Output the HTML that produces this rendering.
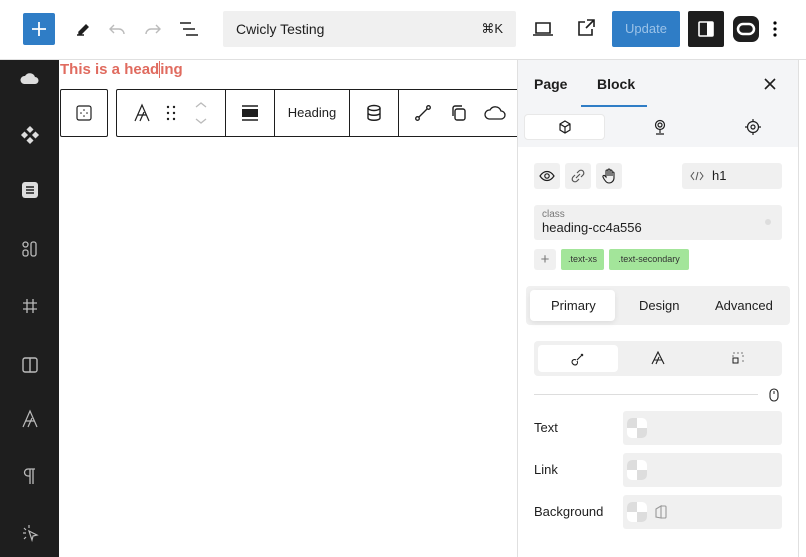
<!DOCTYPE html>
<html><head><style>
*{box-sizing:border-box;margin:0;padding:0}
body{width:806px;height:557px;overflow:hidden;background:#fff;font-family:"Liberation Sans",sans-serif;color:#1e1e1e;position:relative}
.a{position:absolute}
svg{display:block}
.sb svg{position:absolute;left:20px}
.row{font-size:13px}
</style></head><body>
<!-- top bar -->
<div class="a" style="left:0;top:0;width:806px;height:60px;border-bottom:1px solid #e0e0e0"></div>
<div class="a" style="left:23px;top:13px;width:32px;height:32px;background:#2f7dc6;border-radius:2px"><svg width="32" height="32"><path d="M16 9v14M9 16h14" stroke="#fff" stroke-width="1.8"/></svg></div>
<svg class="a" style="left:72px;top:18px" width="22" height="22"><path d="M5 17h7M7 14l7-7 2 2-7 7H7z" stroke="#1e1e1e" stroke-width="1.4" fill="#1e1e1e"/></svg>
<svg class="a" style="left:106px;top:18px" width="22" height="22"><path d="M8 7l-4 4 4 4M4 11h9a5 5 0 0 1 5 5" stroke="#bbb" stroke-width="1.4" fill="none"/></svg>
<svg class="a" style="left:142px;top:18px" width="22" height="22"><path d="M14 7l4 4-4 4M18 11H9a5 5 0 0 0-5 5" stroke="#bbb" stroke-width="1.4" fill="none"/></svg>
<svg class="a" style="left:178px;top:18px" width="22" height="22"><path d="M2 5h11M5 11h12M8 17h12" stroke="#1e1e1e" stroke-width="1.6"/></svg>
<div class="a" style="left:223px;top:11px;width:293px;height:36px;background:#f0f0f0;border-radius:2px;font-size:14px;line-height:36px;padding-left:13px">Cwicly Testing<span style="position:absolute;right:13px;font-size:13px">⌘K</span></div>
<svg class="a" style="left:532px;top:19px" width="22" height="20"><path d="M4 4h14v10H4zM1 16h20" stroke="#1e1e1e" stroke-width="1.6" fill="none"/></svg>
<svg class="a" style="left:576px;top:18px" width="20" height="20"><path d="M9 4H3v13h13v-6M11 2h7v7M18 2l-8 8" stroke="#1e1e1e" stroke-width="1.6" fill="none"/></svg>
<div class="a" style="left:612px;top:11px;width:68px;height:36px;background:#2f7dc6;border-radius:2px;color:#9cc3e8;font-size:13px;line-height:36px;text-align:center">Update</div>
<div class="a" style="left:688px;top:11px;width:36px;height:36px;background:#1e1e1e;border-radius:2px"><svg width="36" height="36"><rect x="11" y="11" width="14" height="14" rx="1" stroke="#fff" stroke-width="1.6" fill="none"/><rect x="19" y="11" width="6" height="14" fill="#fff"/></svg></div>
<div class="a" style="left:733px;top:16px;width:26px;height:26px;background:#1e1e1e;border-radius:7px"><svg width="26" height="26"><rect x="5" y="8" width="16" height="10" rx="5" stroke="#fff" stroke-width="2.5" fill="none"/></svg></div>
<svg class="a" style="left:772px;top:19px" width="6" height="20"><circle cx="3" cy="4" r="1.6"/><circle cx="3" cy="10" r="1.6"/><circle cx="3" cy="16" r="1.6"/></svg>
<!-- left sidebar -->
<div class="a sb" style="left:0;top:60px;width:59px;height:497px;background:#1e1e1e">
<svg style="top:10px" width="20" height="18"><path d="M4 14h11a3.5 3.5 0 0 0 0-7 5.5 5.5 0 0 0-10-1 4 4 0 0 0-1 8z" fill="#ddd"/></svg>
<svg style="top:65px" width="20" height="20"><g fill="#ddd"><rect x="7.5" y="2" width="5" height="5" transform="rotate(45 10 4.5)"/><rect x="7.5" y="13" width="5" height="5" transform="rotate(45 10 15.5)"/><rect x="2" y="7.5" width="5" height="5" transform="rotate(45 4.5 10)"/><rect x="13" y="7.5" width="5" height="5" transform="rotate(45 15.5 10)"/></g></svg>
<svg style="top:120px" width="20" height="20"><rect x="2" y="2" width="16" height="16" rx="3" fill="#ddd"/><path d="M6 7h8M6 10h8M6 13h8" stroke="#1e1e1e" stroke-width="1.4"/></svg>
<svg style="top:179px" width="20" height="20"><g stroke="#bbb" stroke-width="1.3" fill="none"><rect x="3" y="3" width="5" height="5" rx="2.5"/><rect x="3" y="11" width="5" height="6" rx="2"/><rect x="11" y="3" width="5" height="14" rx="2"/></g></svg>
<svg style="top:236px" width="20" height="20"><path d="M7 3v14M13 3v14M3 7h14M3 13h14" stroke="#bbb" stroke-width="1.3"/></svg>
<svg style="top:295px" width="20" height="20"><rect x="3" y="3" width="14" height="14" rx="2" stroke="#bbb" stroke-width="1.4" fill="none"/><path d="M10 3v14" stroke="#bbb" stroke-width="1.4"/></svg>
<svg style="top:349px" width="20" height="20"><path d="M3 18l7-16 7 16M5.5 12h9M8 18l4-9" stroke="#bbb" stroke-width="1.2" fill="none"/></svg>
<svg style="top:406px" width="20" height="20"><path d="M10 3v15M13 3v15M15 3H8a3.5 3.5 0 0 0 0 7h2" stroke="#bbb" stroke-width="1.3" fill="none"/></svg>
<svg style="top:462px" width="20" height="20"><path d="M9 3v3M4 6l2 2M3 11h3M6 15l-2 2M9 9l8 4-4 1-1 4z" stroke="#bbb" stroke-width="1.2" fill="none"/></svg>
</div>
<!-- canvas -->
<div class="a" style="left:60px;top:60px;font-size:15px;font-weight:bold;color:#e06b5f;line-height:19px">This is a head<span style="border-right:1px solid #e06b5f"></span>ing</div>
<div class="a" style="left:60px;top:89px;width:48px;height:48px;border:1px solid #1e1e1e;border-radius:2px"><svg width="46" height="46"><rect x="16" y="16" width="14" height="14" rx="2" stroke="#1e1e1e" stroke-width="1.2" fill="none"/><g fill="#1e1e1e"><circle cx="23" cy="20" r=".8"/><circle cx="20" cy="23" r=".8"/><circle cx="26" cy="23" r=".8"/><circle cx="23" cy="26" r=".8"/></g></svg></div>
<div class="a" style="left:116px;top:89px;width:410px;height:48px;border:1px solid #1e1e1e;border-radius:2px"></div>
<div class="a" style="left:225px;top:89px;width:1px;height:48px;background:#1e1e1e"></div>
<div class="a" style="left:274px;top:89px;width:1px;height:48px;background:#1e1e1e"></div>
<div class="a" style="left:349px;top:89px;width:1px;height:48px;background:#1e1e1e"></div>
<div class="a" style="left:398px;top:89px;width:1px;height:48px;background:#1e1e1e"></div>
<svg class="a" style="left:132px;top:103px" width="20" height="20"><path d="M3 18l7-16 7 16M5.5 12h9M8 18l4-9" stroke="#1e1e1e" stroke-width="1.2" fill="none"/></svg>
<svg class="a" style="left:164px;top:104px" width="14" height="18"><g fill="#1e1e1e"><circle cx="4" cy="3" r="1.2"/><circle cx="10" cy="3" r="1.2"/><circle cx="4" cy="9" r="1.2"/><circle cx="10" cy="9" r="1.2"/><circle cx="4" cy="15" r="1.2"/><circle cx="10" cy="15" r="1.2"/></g></svg>
<svg class="a" style="left:193px;top:100px" width="16" height="26"><path d="M3 7l5-4 5 4M3 19l5 4 5-4" stroke="#bbb" stroke-width="1.3" fill="none"/></svg>
<svg class="a" style="left:241px;top:103px" width="18" height="20"><path d="M1 3h16M1 17h16" stroke="#1e1e1e" stroke-width="1.5"/><rect x="1" y="6" width="16" height="8" fill="#1e1e1e"/></svg>
<div class="a" style="left:275px;top:89px;width:74px;height:48px;font-size:13px;line-height:48px;text-align:center">Heading</div>
<svg class="a" style="left:365px;top:104px" width="18" height="18"><g stroke="#1e1e1e" stroke-width="1.4" fill="none"><ellipse cx="9" cy="4" rx="6" ry="2.5"/><path d="M3 4v10c0 3 12 3 12 0V4M3 9c0 3 12 3 12 0"/></g></svg>
<svg class="a" style="left:414px;top:104px" width="18" height="18"><g stroke="#1e1e1e" stroke-width="1.3" fill="none"><circle cx="3.5" cy="14.5" r="1.8"/><circle cx="14.5" cy="3.5" r="1.8"/><path d="M5 13l8-8"/></g></svg>
<svg class="a" style="left:450px;top:104px" width="18" height="18"><g stroke="#1e1e1e" stroke-width="1.4" fill="none"><rect x="5" y="5" width="10" height="11" rx="2"/><path d="M3 12V4a2 2 0 0 1 2-2h7"/></g></svg>
<svg class="a" style="left:484px;top:104px" width="22" height="18"><path d="M5 15h12a4 4 0 0 0 0-8 6 6 0 0 0-11-1 4.5 4.5 0 0 0-1 9z" stroke="#1e1e1e" stroke-width="1.3" fill="none"/></svg>
<!-- right panel -->
<div class="a" style="left:517px;top:60px;width:282px;height:497px;border-left:1px solid #e0e0e0;border-right:1px solid #e0e0e0;background:#fff"></div>
<div class="a" style="left:518px;top:60px;width:280px;height:87px;background:#f4f5f7"></div>
<div class="a" style="left:534px;top:76px;font-size:14px;font-weight:bold;color:#1e1e1e">Page</div>
<div class="a" style="left:597px;top:76px;font-size:14px;font-weight:bold">Block</div>
<div class="a" style="left:581px;top:105px;width:66px;height:2px;background:#2f7dc6"></div>
<svg class="a" style="left:763px;top:77px" width="14" height="14"><path d="M2 2l10 10M12 2L2 12" stroke="#1e1e1e" stroke-width="1.6"/></svg>
<div class="a" style="left:524px;top:114px;width:81px;height:26px;background:#fff;border-radius:4px;border:1px solid #e8e8e8"></div>
<svg class="a" style="left:558px;top:120px" width="14" height="14"><path d="M7 1l5 3v6l-5 3-5-3V4zM2 4l5 3 5-3M7 7v6" stroke="#1e1e1e" stroke-width="1.2" fill="none"/></svg>
<svg class="a" style="left:653px;top:118px" width="14" height="18"><g stroke="#1e1e1e" stroke-width="1.2" fill="none"><circle cx="7" cy="7" r="4.5"/><circle cx="7" cy="7" r="2"/><path d="M7 12v3M3 16h8"/></g></svg>
<svg class="a" style="left:745px;top:119px" width="16" height="16"><g stroke="#1e1e1e" stroke-width="1.2" fill="none"><circle cx="8" cy="8" r="5.5"/><circle cx="8" cy="8" r="2"/><path d="M8 0v2.5M8 13.5V16M0 8h2.5M13.5 8H16"/></g></svg>
<!-- icon buttons -->
<div class="a" style="left:534px;top:163px;width:26px;height:26px;background:#f0f0f0;border-radius:3px"><svg width="26" height="26"><path d="M6 13c4-6 10-6 14 0-4 6-10 6-14 0z" stroke="#1e1e1e" stroke-width="1.2" fill="none"/><circle cx="13" cy="13" r="2.2" stroke="#1e1e1e" stroke-width="1.2" fill="none"/></svg></div>
<div class="a" style="left:565px;top:163px;width:26px;height:26px;background:#f0f0f0;border-radius:3px"><svg width="26" height="26"><g stroke="#555" stroke-width="1.2" fill="none"><path d="M12 10l2-2a2.5 2.5 0 0 1 4 4l-2 2M14 16l-2 2a2.5 2.5 0 0 1-4-4l2-2M11 15l4-4"/></g></svg></div>
<div class="a" style="left:596px;top:163px;width:26px;height:26px;background:#f0f0f0;border-radius:3px"><svg width="26" height="26"><path d="M10 14V8a1 1 0 0 1 2 0v5V7a1 1 0 0 1 2 0v6V8a1 1 0 0 1 2 0v5-3a1 1 0 0 1 2 0v5a5 5 0 0 1-5 5c-2 0-3-1-5-4l-1-2a1 1 0 0 1 2-1z" stroke="#1e1e1e" stroke-width="1.1" fill="none"/></svg></div>
<div class="a" style="left:682px;top:163px;width:100px;height:26px;background:#f0f0f0;border-radius:3px;font-size:13px;line-height:26px;padding-left:30px">h1<svg style="position:absolute;left:8px;top:8px" width="14" height="10"><path d="M4 1L1 5l3 4M10 1l3 4-3 4M8 1L6 9" stroke="#555" stroke-width="1" fill="none"/></svg></div>
<div class="a" style="left:534px;top:205px;width:248px;height:35px;background:#f0f0f0;border-radius:3px"><div style="position:absolute;left:8px;top:4px;font-size:10px;color:#777">class</div><div style="position:absolute;left:8px;top:15px;font-size:13px">heading-cc4a556</div><div style="position:absolute;right:11px;top:14px;width:6px;height:6px;border-radius:3px;background:#ddd"></div></div>
<div class="a" style="left:534px;top:249px;width:22px;height:21px;background:#f0f0f0;border-radius:3px;text-align:center;line-height:21px;color:#777;font-size:15px">+</div>
<div class="a" style="left:561px;top:249px;width:43px;height:21px;background:#a3e59a;border-radius:2px;font-size:9px;line-height:21px;text-align:center;color:#333">.text-xs</div>
<div class="a" style="left:609px;top:249px;width:80px;height:21px;background:#a3e59a;border-radius:2px;font-size:9px;line-height:21px;text-align:center;color:#333">.text-secondary</div>
<!-- primary tabs -->
<div class="a" style="left:526px;top:286px;width:264px;height:39px;background:#f0f0f0;border-radius:4px"></div>
<div class="a" style="left:530px;top:290px;width:85px;height:31px;background:#fff;border-radius:4px;box-shadow:0 2px 6px rgba(0,0,0,.08)"></div>
<div class="a row" style="left:551px;top:298px">Primary</div>
<div class="a row" style="left:639px;top:298px">Design</div>
<div class="a row" style="left:715px;top:298px">Advanced</div>
<div class="a" style="left:534px;top:341px;width:248px;height:35px;background:#f0f0f0;border-radius:4px"></div>
<div class="a" style="left:538px;top:345px;width:80px;height:27px;background:#fff;border-radius:4px"></div>
<svg class="a" style="left:571px;top:352px" width="14" height="14"><path d="M12 2L6 8M5 8a2.5 2.5 0 0 0-3 4 2.5 2.5 0 0 0 4-3M10 2l2 2" stroke="#1e1e1e" stroke-width="1.1" fill="none"/></svg>
<svg class="a" style="left:651px;top:351px" width="14" height="14"><path d="M1 13L7 1l6 12M3 9h8M5 13l3-7" stroke="#1e1e1e" stroke-width="1.1" fill="none"/></svg>
<svg class="a" style="left:732px;top:352px" width="12" height="12"><path d="M1 1h2M5 1h2M9 1h2M11 3v2M1 3v2" stroke="#777" stroke-width="1"/><rect x="1" y="6" width="5" height="5" stroke="#1e1e1e" fill="none"/><path d="M11 8v2" stroke="#777"/></svg>
<div class="a" style="left:534px;top:394px;width:224px;height:1px;background:#ddd"></div>
<svg class="a" style="left:769px;top:388px" width="10" height="14"><rect x="1" y="1" width="8" height="12" rx="4" stroke="#1e1e1e" stroke-width="1.1" fill="none"/><path d="M5 3v3" stroke="#1e1e1e"/></svg>
<div class="a row" style="left:534px;top:420px">Text</div>
<div class="a row" style="left:534px;top:462px">Link</div>
<div class="a row" style="left:534px;top:504px">Background</div>
<div class="a" style="left:623px;top:411px;width:159px;height:34px;background:#f0f0f0;border-radius:3px"></div>
<div class="a" style="left:623px;top:453px;width:159px;height:34px;background:#f0f0f0;border-radius:3px"></div>
<div class="a" style="left:623px;top:495px;width:159px;height:34px;background:#f0f0f0;border-radius:3px"></div>
<svg class="a" style="left:627px;top:418px" width="20" height="20"><rect width="20" height="20" rx="5" fill="#fff"/><path d="M0 10h10V0H5a5 5 0 0 0-5 5zM10 10h10v5a5 5 0 0 1-5 5h-5z" fill="#ddd"/></svg>
<svg class="a" style="left:627px;top:460px" width="20" height="20"><rect width="20" height="20" rx="5" fill="#fff"/><path d="M0 10h10V0H5a5 5 0 0 0-5 5zM10 10h10v5a5 5 0 0 1-5 5h-5z" fill="#ddd"/></svg>
<svg class="a" style="left:627px;top:502px" width="20" height="20"><rect width="20" height="20" rx="5" fill="#fff"/><path d="M0 10h10V0H5a5 5 0 0 0-5 5zM10 10h10v5a5 5 0 0 1-5 5h-5z" fill="#ddd"/></svg>
<svg class="a" style="left:654px;top:504px" width="14" height="16"><path d="M2 5l5-3v12l-5-1zM7 2h4a1 1 0 0 1 1 1v10a1 1 0 0 1-1 1H7" stroke="#999" stroke-width="1.1" fill="none"/></svg>
</body></html>
